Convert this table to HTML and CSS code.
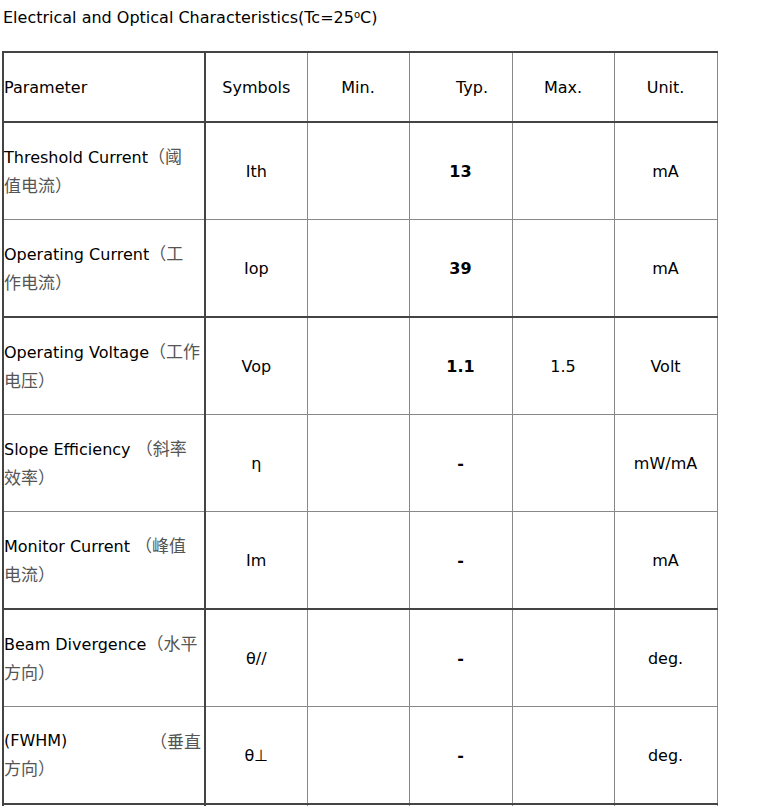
FILE: index.html
```html
<!DOCTYPE html>
<html>
<head>
<meta charset="utf-8">
<title>Electrical and Optical Characteristics</title>
<link rel="stylesheet" href="styles.css">
</head>
<body>
<p class="title">Electrical and Optical Characteristics(Tc=25<span class="deg">o</span>C)</p>
<table class="spec">
  <colgroup>
    <col class="c-param"><col class="c-val"><col class="c-val"><col class="c-typ"><col class="c-val"><col class="c-typ">
  </colgroup>
  <tr class="head">
    <td class="param">Parameter</td>
    <td>Symbols</td>
    <td>Min.</td>
    <td class="typ-head">Typ.</td>
    <td>Max.</td>
    <td>Unit.</td>
  </tr>
  <tr class="thick">
    <td class="param">Threshold Current<span class="cjk">（阈<br>值电流）</span></td>
    <td>Ith</td><td></td><td class="b">13</td><td></td><td>mA</td>
  </tr>
  <tr>
    <td class="param">Operating Current<span class="cjk">（工<br>作电流）</span></td>
    <td>Iop</td><td></td><td class="b">39</td><td></td><td>mA</td>
  </tr>
  <tr class="thick">
    <td class="param">Operating Voltage<span class="cjk">（工作<br>电压）</span></td>
    <td>Vop</td><td></td><td class="b">1.1</td><td>1.5</td><td>Volt</td>
  </tr>
  <tr>
    <td class="param">Slope Efficiency <span class="cjk">（斜率<br>效率）</span></td>
    <td>η</td><td></td><td class="b">-</td><td></td><td>mW/mA</td>
  </tr>
  <tr>
    <td class="param">Monitor Current <span class="cjk">（峰值<br>电流）</span></td>
    <td>Im</td><td></td><td class="b">-</td><td></td><td>mA</td>
  </tr>
  <tr class="thick">
    <td class="param">Beam Divergence<span class="cjk">（水平<br>方向）</span></td>
    <td>θ//</td><td></td><td class="b">-</td><td></td><td>deg.</td>
  </tr>
  <tr>
    <td class="param"><span class="split"><span>(FWHM)</span><span class="cjk">（垂直</span></span><span class="cjk">方向）</span></td>
    <td>θ⊥</td><td></td><td class="b">-</td><td></td><td>deg.</td>
  </tr>
  <tr class="thick tail">
    <td class="param"></td><td></td><td></td><td></td><td></td><td></td>
  </tr>
</table>
</body>
</html>
```
FILE: styles.css
```css
html, body {
  margin: 0;
  padding: 0;
  background: #fff;
}
body {
  padding: 0 3px 0 2px;
  font-family: "DejaVu Sans", "Noto Sans CJK SC", sans-serif;
  font-size: 16px;
  color: #000;
}
.title {
  margin: 5px 0 0 1px;
  height: 46px;
  line-height: 20px;
  font-size: 16px;
}
.deg {
  font-size: 10px;
  vertical-align: 5px;
}
.spec {
  border-collapse: collapse;
  table-layout: fixed;
  width: 714px;
  border-top: 2px solid #444;
  border-left: 2px solid #444;
}
.c-param { width: 202px; }
.c-val { width: 102px; }
.c-typ { width: 103px; }
.spec td {
  border: 1px solid #888;
  text-align: center;
  vertical-align: middle;
  padding: 0 1px;
  height: 96px;
  line-height: 27px;
}
.spec td.param {
  text-align: left;
  border-right: 2px solid #444;
  padding: 0 3px 0 0;
  white-space: nowrap;
}
.spec tr.head td {
  height: 68px;
}
.spec tr.thick td {
  border-top: 2px solid #444;
}
.spec tr.tail td {
  height: 1px;
  border-bottom: none;
}
.typ-head {
  padding-left: 24px !important;
}
.b {
  font-weight: bold;
}
.cjk {
  font-family: "Noto Sans CJK SC", sans-serif;
  font-size: 17px;
  color: #555;
}
.split {
  display: flex;
  justify-content: space-between;
}
```
